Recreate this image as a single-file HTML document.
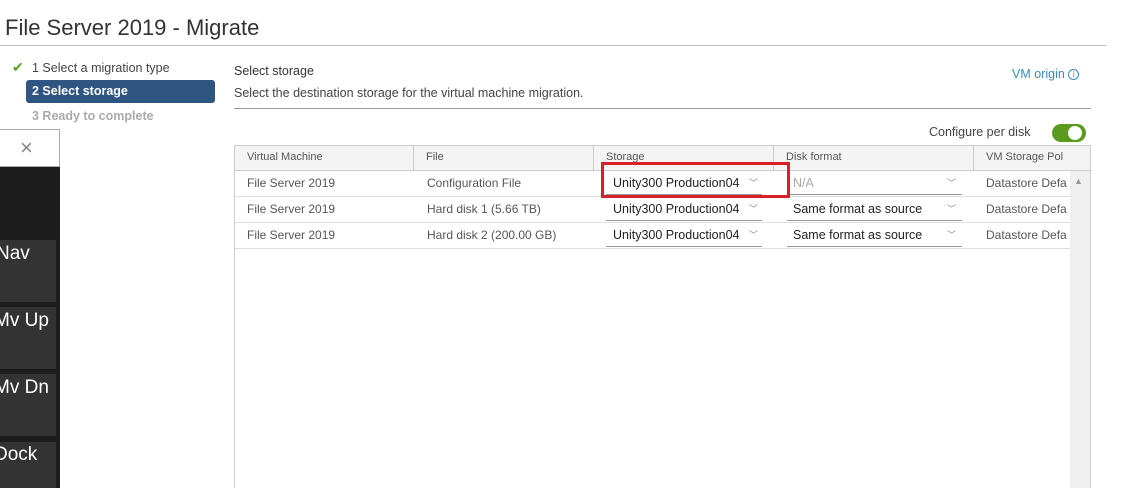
<!DOCTYPE html><html style="overflow:hidden;height:488px"><head><style>
body{margin:0;width:1128px;height:488px;overflow:hidden;background:#fff;font-family:"Liberation Sans",sans-serif;position:relative;color:#333}
.a{position:absolute;white-space:nowrap}
.cell{position:absolute;font-size:12px;color:#565656}
.sel{position:absolute;height:21px;border-bottom:1px solid #9a9a9a;font-size:12.5px;color:#222}
.chev{position:absolute;right:6px;top:3px;font-size:9px;color:#888}
.btn{position:absolute;left:0;width:56px;height:62px;background:#333;color:#fff;font-size:19px}
</style></head><body>
<div class="a" style="left:5px;top:15px;font-size:22px;color:#333">File Server 2019 - Migrate</div>
<div class="a" style="left:0;top:45px;width:1106px;height:1px;background:#bbb"></div>
<div class="a" style="left:12px;top:59px;font-size:14px;color:#5aa220">✔</div>
<div class="a" style="left:32px;top:61px;font-size:12.5px;color:#444">1 Select a migration type</div>
<div class="a" style="left:26px;top:80px;width:189px;height:23px;background:#2f5582;border-radius:3px"></div>
<div class="a" style="left:32px;top:84px;font-size:12.5px;font-weight:bold;color:#fff">2 Select storage</div>
<div class="a" style="left:32px;top:109px;font-size:12.5px;font-weight:bold;color:#aaa">3 Ready to complete</div>
<div class="a" style="left:234px;top:64px;font-size:12.5px;color:#333">Select storage</div>
<div class="a" style="left:234px;top:86px;font-size:12.5px;color:#444">Select the destination storage for the virtual machine migration.</div>
<div class="a" style="left:234px;top:108px;width:857px;height:1px;background:#999"></div>
<div class="a" style="left:1012px;top:67px;font-size:12.5px;color:#3a8ac0">VM origin <span style="display:inline-block;width:9px;height:9px;border:1px solid #3a8ac0;border-radius:50%;font-size:8px;text-align:center;line-height:9px;vertical-align:middle">i</span></div>
<div class="a" style="left:929px;top:125px;font-size:12.5px;color:#444">Configure per disk</div>
<div class="a" style="left:1052px;top:124px;width:34px;height:18px;border-radius:9px;background:#5a9a1e"></div>
<div class="a" style="left:1068px;top:126px;width:14px;height:14px;border-radius:50%;background:#fff"></div>
<div class="a" style="left:234px;top:145px;width:855px;height:350px;border:1px solid #ccc"></div>
<div class="a" style="left:235px;top:146px;width:855px;height:24px;background:#f4f4f4;border-bottom:1px solid #ccc"></div>
<div class="a" style="left:413px;top:146px;width:1px;height:24px;background:#ccc"></div>
<div class="a" style="left:593px;top:146px;width:1px;height:24px;background:#ccc"></div>
<div class="a" style="left:773px;top:146px;width:1px;height:24px;background:#ccc"></div>
<div class="a" style="left:973px;top:146px;width:1px;height:24px;background:#ccc"></div>
<div class="cell" style="left:247px;top:151px;font-size:11px">Virtual Machine</div>
<div class="cell" style="left:426px;top:151px;font-size:11px">File</div>
<div class="cell" style="left:606px;top:151px;font-size:11px">Storage</div>
<div class="cell" style="left:786px;top:151px;font-size:11px">Disk format</div>
<div class="cell" style="left:986px;top:151px;font-size:11px">VM Storage Pol</div>
<div class="a" style="left:1070px;top:171px;width:20px;height:320px;background:#f0f0f0"></div>
<div class="a" style="left:1074px;top:176px;font-size:9px;color:#999">▲</div>
<div class="a" style="left:235px;top:196px;width:835px;height:1px;background:#ddd"></div>
<div class="a" style="left:235px;top:222px;width:835px;height:1px;background:#ddd"></div>
<div class="a" style="left:235px;top:248px;width:835px;height:1px;background:#ddd"></div>

<div class="cell" style="left:247px;top:176px">File Server 2019</div>
<div class="cell" style="left:427px;top:176px">Configuration File</div>
<div class="sel" style="left:606px;top:173px;width:156px"><span style="position:absolute;left:7px;top:3px">Unity300 Production04</span><span class="chev" style="right:4px">﹀</span></div>
<div class="sel" style="left:787px;top:173px;width:175px;color:#aaa"><span style="position:absolute;left:6px;top:3px">N/A</span><span class="chev">﹀</span></div>
<div class="cell" style="left:986px;top:176px">Datastore Defa</div>

<div class="cell" style="left:247px;top:202px">File Server 2019</div>
<div class="cell" style="left:427px;top:202px">Hard disk 1 (5.66 TB)</div>
<div class="sel" style="left:606px;top:199px;width:156px"><span style="position:absolute;left:7px;top:3px">Unity300 Production04</span><span class="chev" style="right:4px">﹀</span></div>
<div class="sel" style="left:787px;top:199px;width:175px"><span style="position:absolute;left:6px;top:3px">Same format as source</span><span class="chev">﹀</span></div>
<div class="cell" style="left:986px;top:202px">Datastore Defa</div>

<div class="cell" style="left:247px;top:228px">File Server 2019</div>
<div class="cell" style="left:427px;top:228px">Hard disk 2 (200.00 GB)</div>
<div class="sel" style="left:606px;top:225px;width:156px"><span style="position:absolute;left:7px;top:3px">Unity300 Production04</span><span class="chev" style="right:4px">﹀</span></div>
<div class="sel" style="left:787px;top:225px;width:175px"><span style="position:absolute;left:6px;top:3px">Same format as source</span><span class="chev">﹀</span></div>
<div class="cell" style="left:986px;top:228px">Datastore Defa</div>

<div class="a" style="left:601px;top:162px;width:183px;height:30px;border:3px solid #d9202a"></div>

<div class="a" style="left:0;top:129px;width:60px;height:38px;background:#fff;border:1px solid #aaa;border-left:none;box-sizing:border-box"></div>
<div class="a" style="left:20px;top:135px;font-size:22px;color:#888;font-weight:300">×</div>
<div class="a" style="left:0;top:167px;width:60px;height:321px;background:#1c1c1c"></div>
<div class="btn" style="top:240px"><span style="position:absolute;left:-4px;top:3px">Nav</span></div>
<div class="btn" style="top:307px"><span style="position:absolute;left:-6px;top:3px">Mv Up</span></div>
<div class="btn" style="top:374px"><span style="position:absolute;left:-6px;top:3px">Mv Dn</span></div>
<div class="btn" style="top:442px;height:46px"><span style="position:absolute;left:-6px;top:2px">Dock</span></div>
</body></html>
